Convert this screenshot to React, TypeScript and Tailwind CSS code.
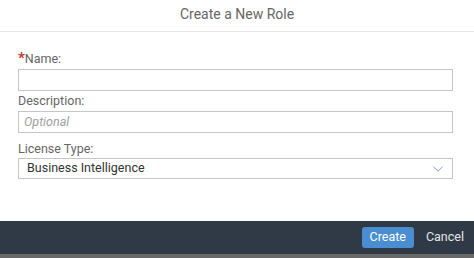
import { ChevronDown } from 'lucide-react';

const App = () => {
  return (
    <div className="w-[474px] h-[258px] bg-white flex flex-col font-['Roboto',Arial,sans-serif] overflow-hidden">
      <div className="h-[32px] shrink-0 border-b border-[#e8e8e8] flex items-center justify-center">
        <span className="text-[14px] text-[#666] mt-[-2px]">Create a New Role</span>
      </div>

      <div className="flex-1 flex flex-col pl-[18px] pr-[21px] pt-[18px]">
        <label className="text-[12.5px] leading-[16px] text-[#666]">
          <span className="text-[#c0392b] text-[15px] font-bold">*</span>Name:
        </label>
        <div className="mt-[2px] h-[22px] border border-[#c6c6c6] bg-white"></div>

        <label className="mt-[2px] text-[12.5px] leading-[16px] text-[#666]">Description:</label>
        <div className="mt-[2px] h-[22px] border border-[#c6c6c6] bg-white flex items-center px-[5px]">
          <span className="text-[12.5px] italic text-[#a0a0a0]">Optional</span>
        </div>

        <label className="mt-[8px] text-[12.5px] leading-[16px] text-[#666]">License Type:</label>
        <div className="mt-[1px] h-[21px] border border-[#c6c6c6] bg-white flex items-center justify-between pl-[8px] pr-[5px]">
          <span className="text-[12.5px] text-[#333]">Business Intelligence</span>
          <ChevronDown className="w-[18px] h-[18px] text-[#6a8db0]" strokeWidth={1.1} />
        </div>
      </div>

      <div className="h-[33px] shrink-0 bg-[#2f3a46] flex items-center justify-end pr-[10px] gap-[12px]">
        <button className="h-[21px] px-[8px] rounded-[3px] bg-[#4a8dd0] text-white text-[12.5px]">Create</button>
        <button className="text-[12.5px] text-[#e6e6e6]">Cancel</button>
      </div>
      <div className="h-[4px] shrink-0 bg-[#686868]"></div>
    </div>
  );
};

export default App;
